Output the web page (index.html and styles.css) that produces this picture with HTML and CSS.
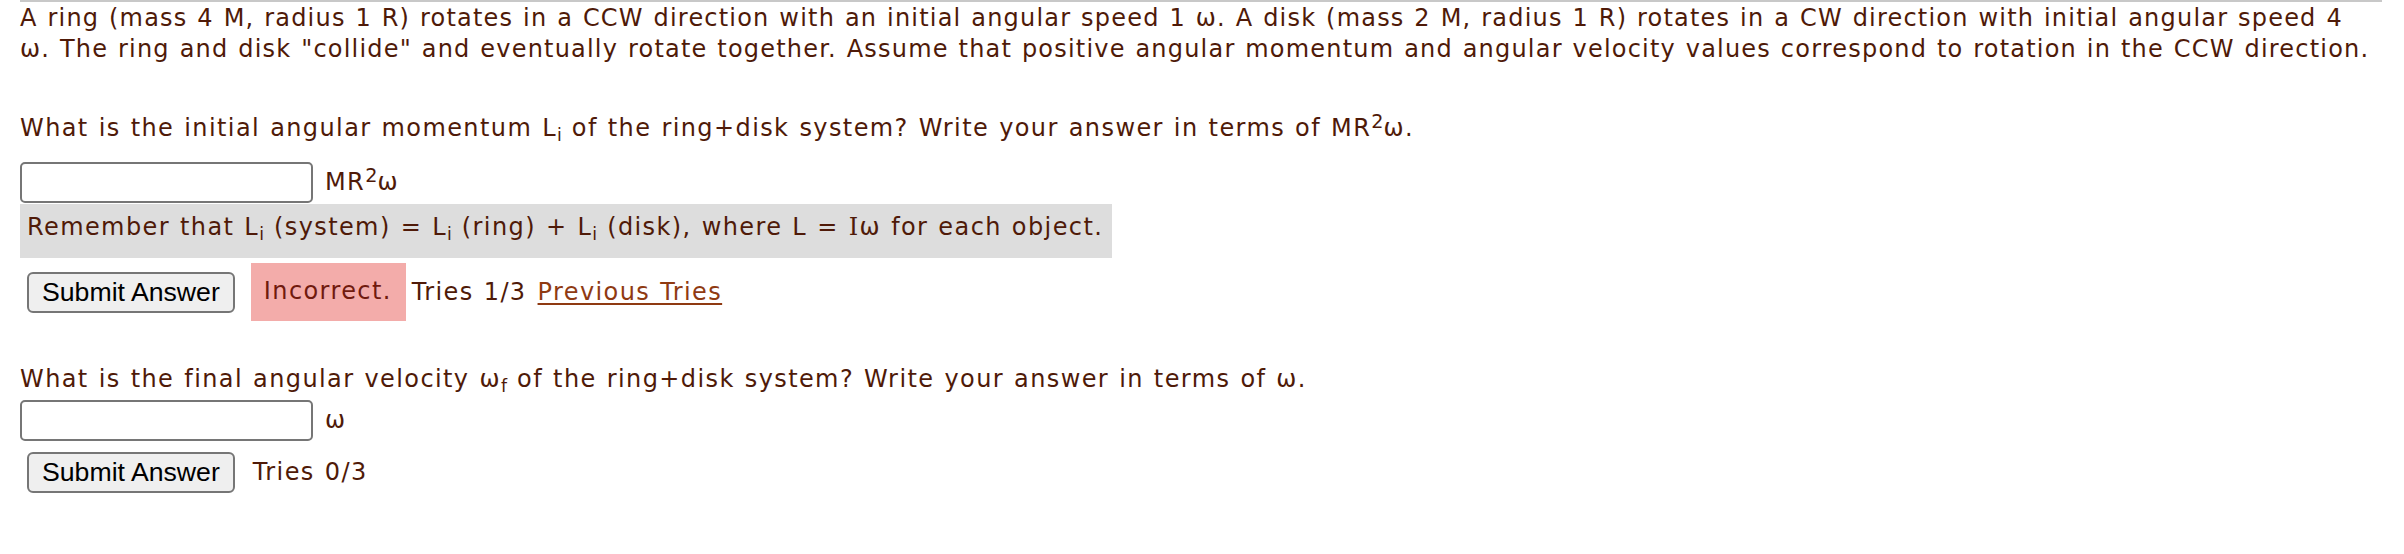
FILE: index.html
```html
<!DOCTYPE html>
<html lang="en">
<head>
<meta charset="utf-8">
<title>Angular momentum problem</title>
<link rel="stylesheet" href="styles.css">
</head>
<body>
<div class="page">
  <div class="problem">
    <p class="intro">A ring (mass 4 M, radius 1 R) rotates in a CCW direction with an initial angular speed 1 ω. A disk (mass 2 M, radius 1 R) rotates in a CW direction with initial angular speed 4<br>ω. The ring and disk "collide" and eventually rotate together. Assume that positive angular momentum and angular velocity values correspond to rotation in the CCW direction.</p>

    <section class="part part-one">
      <p class="question">What is the initial angular momentum L<sub>i</sub> of the ring+disk system? Write your answer in terms of MR<sup>2</sup>ω.</p>
      <div class="answer-row">
        <input class="answer" type="text" aria-label="Initial angular momentum">
        <span class="unit">MR<sup>2</sup>ω</span>
      </div>
      <div class="hint">Remember that L<sub>i</sub> (system) = L<sub>i</sub> (ring) + L<sub>i</sub> (disk), where L = <span class="serif-i">I</span>ω for each object.</div>
      <div class="submit-row">
        <button class="submit" type="button">Submit Answer</button>
        <span class="incorrect">Incorrect.</span>
        <span class="tries">Tries 1/3</span>
        <a class="prev" href="#">Previous Tries</a>
      </div>
    </section>

    <section class="part part-two">
      <p class="question">What is the final angular velocity ω<sub>f</sub> of the ring+disk system? Write your answer in terms of ω.</p>
      <div class="answer-row">
        <input class="answer" type="text" aria-label="Final angular velocity">
        <span class="unit">ω</span>
      </div>
      <div class="submit-row plain">
        <button class="submit" type="button">Submit Answer</button>
        <span class="tries tries-first">Tries 0/3</span>
      </div>
    </section>
  </div>
</div>
</body>
</html>
```

FILE: styles.css
```css
html, body {
  margin: 0;
  padding: 0;
  background: #ffffff;
}

body {
  font-family: "DejaVu Sans", Verdana, sans-serif;
  font-size: 24px;
  line-height: 31px;
  letter-spacing: 1.4px;
  word-spacing: 1px;
  color: #4f1a08;
}

.page {
  padding: 0 22px 0 20px;
}

.problem {
  border-top: 2px solid #c8c8c8;
}

.intro {
  margin: 0;
  padding-top: 1px;
  letter-spacing: 1.2px;
  white-space: nowrap;
}

.question {
  margin: 0;
}

sub, sup {
  font-size: 0.72em;
  line-height: 0;
  letter-spacing: 0;
}

sub {
  vertical-align: -0.3em;
}

sup {
  font-size: 0.8em;
  vertical-align: 0.42em;
}

.part-one .question {
  margin-top: 48px;
}

.part-two .question {
  margin-top: 43px;
}

.answer-row {
  display: flex;
  align-items: center;
  height: 41px;
}

.part-one .answer-row {
  margin-top: 18px;
}

.part-two .answer-row {
  margin-top: 5px;
}

.answer {
  box-sizing: border-box;
  width: 293px;
  height: 41px;
  margin: 0 12px 0 0;
  padding: 2px 4px;
  border: 2px solid #767676;
  border-radius: 5px;
  background: #ffffff;
  font-family: "Liberation Sans", Arial, sans-serif;
  font-size: 26px;
}

.unit {
  white-space: nowrap;
}

.hint {
  width: fit-content;
  margin-top: 1px;
  padding: 8px 9px 15px 7px;
  background: #dddddd;
}

.serif-i {
  font-family: "DejaVu Serif", "Liberation Serif", serif;
}

.submit-row {
  display: flex;
  align-items: center;
  height: 58px;
  margin-top: 5px;
}

.submit-row.plain {
  height: 41px;
  margin-top: 11px;
}

.submit {
  box-sizing: border-box;
  height: 41px;
  margin: 0 0 0 7px;
  padding: 0 13px;
  border: 2px solid #767676;
  border-radius: 6px;
  background: #efefef;
  color: #000000;
  font-family: "Liberation Sans", Arial, sans-serif;
  font-size: 26.67px;
  line-height: 1;
  letter-spacing: 0;
  word-spacing: 0;
}

.incorrect {
  box-sizing: border-box;
  height: 58px;
  margin-left: 16px;
  padding: 13px 14px 0 13px;
  background: #f3acaa;
  color: #701a0e;
}

.tries {
  margin-left: 6px;
  white-space: nowrap;
}

.tries-first {
  margin-left: 18px;
}

.prev {
  margin-left: 11px;
  color: #8f3a12;
  text-decoration: underline;
  text-underline-offset: 3px;
  white-space: nowrap;
}
```
